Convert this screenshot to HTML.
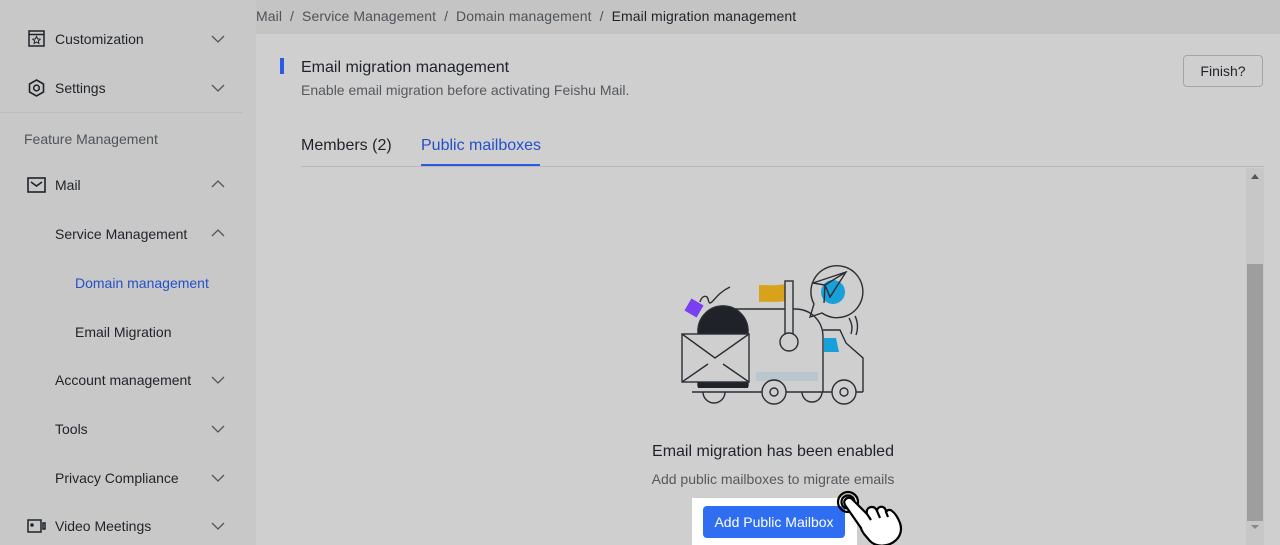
<!DOCTYPE html><html><head><meta charset="utf-8"><style>
*{margin:0;padding:0;box-sizing:border-box}
body{width:1280px;height:545px;overflow:hidden;background:#c4c4c4;font-family:"Liberation Sans",sans-serif;position:relative;color:#1f2329}
.sb{position:absolute;left:0;top:0;width:256px;height:545px;background:#c8c8c8}
.it{position:absolute;font-size:14px;color:#1f2329}
.ch{position:absolute;left:211px;width:14px;height:14px}
.bc{position:absolute;left:256px;top:8px;font-size:14px;color:#4e5358;letter-spacing:0.1px}
.panel{position:absolute;left:256px;top:34px;width:1024px;height:511px;background:#cfcfcf}
</style></head><body>
<div class="sb">
<svg style="position:absolute;left:28px;top:30px" width="17" height="17" viewBox="0 0 17 17" fill="none" stroke="#1f2329" stroke-width="1.5"><rect x="1" y="1" width="15" height="15"/><line x1="1" y1="4.5" x2="16" y2="4.5"/><path d="M8.5 6.5l1.2 2.4 2.5.3-1.8 1.7.5 2.5-2.4-1.3-2.4 1.3.5-2.5-1.8-1.7 2.5-.3z" stroke-width="1"/></svg>
<div class="it" style="left:55px;top:31px">Customization</div>
<svg class="ch" style="top:32px" viewBox="0 0 14 14"><path d="M1 4l6 6 6-6" fill="none" stroke="#555" stroke-width="1.3"/></svg>
<svg style="position:absolute;left:28px;top:79px" width="17" height="18" viewBox="0 0 17 18" fill="none" stroke="#1f2329" stroke-width="1.6"><path d="M8.5 1l7 4v8l-7 4-7-4V5z"/><circle cx="8.5" cy="9" r="2.8"/></svg>
<div class="it" style="left:55px;top:80px">Settings</div>
<svg class="ch" style="top:81px" viewBox="0 0 14 14"><path d="M1 4l6 6 6-6" fill="none" stroke="#555" stroke-width="1.3"/></svg>
<div style="position:absolute;left:0;top:112px;width:242px;height:1px;background:#bdbdbd"></div>
<div class="it" style="left:24px;top:131px;color:#4e5358">Feature Management</div>
<svg style="position:absolute;left:27px;top:177px" width="19" height="16" viewBox="0 0 19 16" fill="none" stroke="#1f2329" stroke-width="1.6"><rect x="1" y="1" width="17" height="14"/><path d="M4 5l5.5 4 5.5-4"/></svg>
<div class="it" style="left:55px;top:177px">Mail</div>
<svg class="ch" style="top:177px" viewBox="0 0 14 14"><path d="M1 10l6-6 6 6" fill="none" stroke="#555" stroke-width="1.3"/></svg>
<div class="it" style="left:55px;top:226px">Service Management</div>
<svg class="ch" style="top:226px" viewBox="0 0 14 14"><path d="M1 10l6-6 6 6" fill="none" stroke="#555" stroke-width="1.3"/></svg>
<div class="it" style="left:75px;top:275px;color:#2450c8">Domain management</div>
<div class="it" style="left:75px;top:324px">Email Migration</div>
<div class="it" style="left:55px;top:372px">Account management</div>
<svg class="ch" style="top:373px" viewBox="0 0 14 14"><path d="M1 4l6 6 6-6" fill="none" stroke="#555" stroke-width="1.3"/></svg>
<div class="it" style="left:55px;top:421px">Tools</div>
<svg class="ch" style="top:422px" viewBox="0 0 14 14"><path d="M1 4l6 6 6-6" fill="none" stroke="#555" stroke-width="1.3"/></svg>
<div class="it" style="left:55px;top:470px">Privacy Compliance</div>
<svg class="ch" style="top:471px" viewBox="0 0 14 14"><path d="M1 4l6 6 6-6" fill="none" stroke="#555" stroke-width="1.3"/></svg>
<svg style="position:absolute;left:27px;top:519px" width="20" height="14" viewBox="0 0 20 14" fill="none" stroke="#1f2329" stroke-width="1.5"><rect x="1" y="1" width="13" height="12"/><rect x="16" y="4" width="2" height="6"/><circle cx="5" cy="6" r="1" fill="#1f2329"/></svg>
<div class="it" style="left:55px;top:518px">Video Meetings</div>
<svg class="ch" style="top:519px" viewBox="0 0 14 14"><path d="M1 4l6 6 6-6" fill="none" stroke="#555" stroke-width="1.3"/></svg>
</div>
<div class="bc">Mail &nbsp;/&nbsp; Service Management &nbsp;/&nbsp; Domain management &nbsp;/&nbsp; <span style="color:#1f2329">Email migration management</span></div>
<div class="panel">
<div style="position:absolute;left:24px;top:24px;width:4px;height:16px;background:#2d5be0"></div>
<div style="position:absolute;left:45px;top:25px;font-size:16px">Email migration management</div>
<div style="position:absolute;left:45px;top:48px;font-size:14px;color:#55595e">Enable email migration before activating Feishu Mail.</div>
<div style="position:absolute;left:927px;top:21px;width:80px;height:32px;border:1px solid #a5a5a5;border-radius:4px;font-size:14px;text-align:center;line-height:30px">Finish?</div>
<div style="position:absolute;left:45px;top:103px;font-size:16px">Members (2)</div>
<div style="position:absolute;left:165px;top:103px;font-size:16px;color:#2450c8">Public mailboxes</div>
<div style="position:absolute;left:45px;top:132px;width:963px;height:1px;background:#b8b8b8"></div>
<div style="position:absolute;left:165px;top:130px;width:119px;height:2px;background:#2d5be0"></div>
<div style="position:absolute;left:990px;top:134px;width:18px;height:377px;background:#c7c7c7"></div>
<div style="position:absolute;left:991px;top:230px;width:16px;height:257px;background:#9e9e9e"></div>
<div style="position:absolute;left:995px;top:140px;border:4px solid transparent;border-bottom:5px solid #555;border-top:0"></div>
<div style="position:absolute;left:995px;top:491px;border:4px solid transparent;border-top:4px solid #888;border-bottom:0"></div>
<div style="position:absolute;left:0;width:1034px;top:409px;text-align:center;font-size:16px">Email migration has been enabled</div>
<div style="position:absolute;left:0;width:1034px;top:437px;text-align:center;font-size:14px;color:#55595e">Add public mailboxes to migrate emails</div>
<div style="position:absolute;left:436px;top:464px;width:165px;height:47px;background:#fff"></div>
<div style="position:absolute;left:447px;top:472px;width:142px;height:32px;background:#2f6ef0;border-radius:4px;color:#fff;font-size:14px;text-align:center;line-height:32px">Add Public Mailbox</div>
</div>
<svg style="position:absolute;left:660px;top:250px" width="260" height="160" viewBox="660 250 260 160" fill="none" stroke="#2a2d33" stroke-width="1.4">
<rect x="687" y="301" width="14" height="14" fill="#7a3ff0" stroke="none" transform="rotate(30 694 308)"/>
<path d="M700 302c1-4 4-7 7-5 2 2 1 6 3 6 3 0 7-10 20-16"/>
<path d="M759 285c9 0 17 1 26-1v17c-9 2-17 0-26 1z" fill="#d8a31a" stroke="none"/>
<path d="M698 386V331a25 25 0 0 1 50 0v55z" fill="#1f2329"/>
<path d="M723 309h72c16 0 28 12 28 28v55"/>
<path d="M823 330h17l6 13 17 15v34"/>
<path d="M824 338h12l3 14h-15z" fill="#1aa0d8" stroke="none"/>
<path d="M698 331a25 25 0 0 1 50 0" fill="#1f2329"/>
<rect x="785" y="281" width="8" height="54" fill="#cfcfcf"/>
<circle cx="789" cy="342" r="9" fill="#cfcfcf"/>
<rect x="682" y="334" width="67" height="48" fill="#cfcfcf"/>
<path d="M682 334l33 24 34-24M682 382l26-18M749 382l-26-18"/>
<rect x="698" y="383" width="50" height="5" fill="#1f2329" stroke="none"/>
<rect x="756" y="372" width="62" height="9" fill="#b9c6cd" stroke="none"/>
<path d="M692 392h171"/>
<path d="M703 392a11 11 0 0 0 22 0"/>
<circle cx="774" cy="392" r="12" fill="#cfcfcf"/><circle cx="774" cy="392" r="4"/>
<path d="M802 392a10 10 0 0 0 20 0"/>
<circle cx="844" cy="392" r="12" fill="#cfcfcf"/><circle cx="844" cy="392" r="4"/>
<path d="M849 318c3 5 4 10 2 16M855 316c3 6 3 13 1 19"/>
<path d="M822 313a26 26 0 1 0-8-9l-4 13z"/>
<circle cx="833" cy="292" r="12" fill="#1aa0d8" stroke="none"/>
<path d="M813 283l33-11-16 25-5-12zM825 285l21-13M825 285l-1 18"/>
</svg>
<svg style="position:absolute;left:830px;top:485px" width="80" height="60" viewBox="830 485 80 60" fill="none" stroke="#000" stroke-width="2.2" stroke-linejoin="round">
<circle cx="848" cy="502" r="10"/><circle cx="848" cy="502" r="6.5"/>
<path d="M845 500c2-3 6-3 8 0l14 14c-1-4 1-7 5-7 3 0 4 2 5 4 0-3 3-5 6-4 2 1 3 3 3 5 1-2 4-3 6-1 3 2 6 7 8 12 3 9-1 17-10 21-7 3-15 2-20-3l-6-7c-2-3-3-5-3-6l-16-23c-1-2-1-4 0-5z" fill="#fff"/>
<path d="M867 514l4 6M877 511l3 7M886 512l2 5"/>
</svg>
</body></html>
